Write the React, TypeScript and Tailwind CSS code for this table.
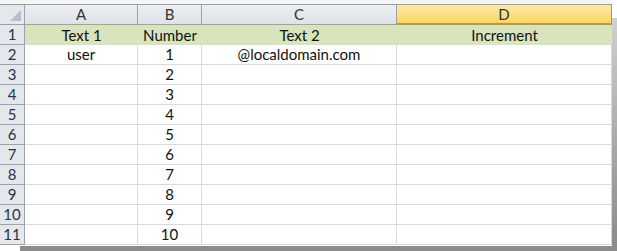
const COLS = ["A", "B", "C", "D"]

const ROWS: string[][] = [
  ["Text 1", "Number", "Text 2", "Increment"],
  ["user", "1", "@localdomain.com", ""],
  ["", "2", "", ""],
  ["", "3", "", ""],
  ["", "4", "", ""],
  ["", "5", "", ""],
  ["", "6", "", ""],
  ["", "7", "", ""],
  ["", "8", "", ""],
  ["", "9", "", ""],
  ["", "10", "", ""],
]

export default function App() {
  return (
    <div
      className="w-[617px] h-[251px] bg-white overflow-hidden relative text-[#111]"
      style={{ fontFamily: "Lato, 'Liberation Sans', sans-serif" }}
    >
      {/* top strip */}
      <div className="h-[4px] bg-[#f4f5f7] w-[612px]" />
      <div className="h-px bg-[#9a9ea4] w-[612px]" />

      <div className="grid grid-cols-[25px_113px_64px_195px_215px] auto-rows-[20px] w-[612px]">
        {/* corner */}
        <div className="relative bg-[#e4e7ec] border-r border-b border-[#9ea3aa]">
          <div className="absolute right-[3px] bottom-[3px] w-0 h-0 border-l-[11px] border-l-transparent border-b-[11px] border-b-[#b9bec5]" />
        </div>
        {COLS.map((c) =>
          c === "D" ? (
            <div
              key={c}
              className="flex items-center justify-center text-[15px] text-[#333] bg-gradient-to-b from-[#fde9a6] to-[#f9d75e] border-b-2 border-r border-[#c8923a]"
            >
              {c}
            </div>
          ) : (
            <div
              key={c}
              className="flex items-center justify-center text-[15px] text-[#333] bg-gradient-to-b from-[#eceef1] to-[#dfe2e7] border-r border-b border-[#9ea3aa]"
            >
              {c}
            </div>
          )
        )}

        {ROWS.map((row, i) => (
          <Row key={i} index={i + 1} cells={row} />
        ))}
      </div>

      {/* drop shadow */}
      <div className="absolute left-[612px] top-[18px] w-[5px] h-[233px] bg-gradient-to-b from-[#d0d0d0] to-[#8a8a8a]" />
      <div className="absolute left-[20px] top-[246px] w-[597px] h-[5px] bg-[#8c8c8c]" />
    </div>
  )
}

function Row({ index, cells }: { index: number; cells: string[] }) {
  const header = index === 1
  return (
    <>
      <div className="flex items-center justify-center text-[15px] text-[#2a3345] bg-[#e4e7ec] border-r border-b border-[#9ea3aa]">
        {index}
      </div>
      {cells.map((v, j) => (
        <div
          key={j}
          className={`flex items-center justify-center text-[15px] leading-none ${
            header
              ? "bg-[#d8e4bc]"
              : "bg-white border-r border-b border-[#d9d9d9]"
          }`}
        >
          {v}
        </div>
      ))}
    </>
  )
}
